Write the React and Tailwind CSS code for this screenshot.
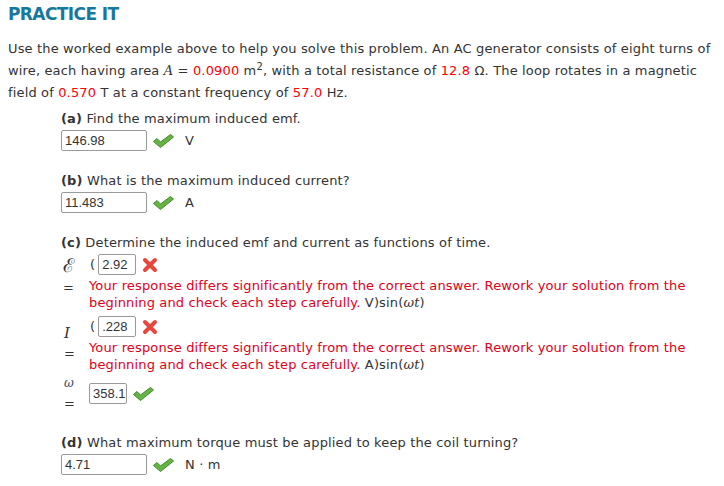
import React from 'react'

const Check = () => (
  <svg width="23" height="16" viewBox="0 0 23 16" className="shrink-0">
    <path d="M1.5 8.5 L5 5.5 L8.5 9 L18.5 1.5 L21.5 4 L8.5 14.5 Z" fill="#66b544" stroke="#3f8a2a" strokeWidth="1" strokeLinejoin="round" />
  </svg>
)

const Cross = () => (
  <svg width="16" height="16" viewBox="0 0 16 16" className="shrink-0">
    <path d="M3 3 L13 13 M13 3 L3 13" stroke="#e8473d" strokeWidth="4" strokeLinecap="round" />
  </svg>
)

const Box = ({ value, w }) => (
  <div className={`${w} h-[21px] border border-[#9a9a9a] rounded-[2px] bg-white px-[3px] flex items-center font-['Liberation_Sans'] text-[13px] text-[#333] leading-none tracking-normal`}>
    {value}
  </div>
)

const Red = ({ children }) => <span className="text-[#ff0000]">{children}</span>

const ErrorText = ({ unit }) => (
  <div className="leading-[17px] pt-[2px]">
    <span className="text-[#e0001a]">
      Your response differs significantly from the correct answer. Rework your solution from the beginning and check each step carefully.
    </span>{' '}
    {unit})sin(<i className="font-['DejaVu_Serif']">ωt</i>)
  </div>
)

function App() {
  return (
    <div className="w-[724px] h-[486px] bg-white text-[#333] text-[13px] tracking-[0.15px] font-['DejaVu_Sans',sans-serif] px-[8px] pt-[3px] overflow-hidden">

      {/* HEADING */}
      <h2 className="text-[17px] font-bold text-[#17789e] tracking-[-0.6px] leading-[22px]">PRACTICE IT</h2>

      {/* PROBLEM */}
      <p className="mt-[13px] leading-[22px]">
        Use the worked example above to help you solve this problem. An AC generator consists of eight turns of wire, each having area <i className="font-['DejaVu_Serif']">A</i> = <Red>0.0900</Red> m<sup className="text-[10px]">2</sup>, with a total resistance of <Red>12.8</Red> Ω. The loop rotates in a magnetic field of <Red>0.570</Red> T at a constant frequency of <Red>57.0</Red> Hz.
      </p>

      <div className="pl-[53px] pr-[20px]">

        {/* PART A */}
        <div className="mt-[6px]">
          <div className="leading-[17px]"><b>(a)</b> Find the maximum induced emf.</div>
          <div className="flex items-center mt-[3px]">
            <Box value="146.98" w="w-[86px]" />
            <div className="ml-[5px]"><Check /></div>
            <span className="ml-[10px]">V</span>
          </div>
        </div>

        {/* PART B */}
        <div className="mt-[21px]">
          <div className="leading-[17px]"><b>(b)</b> What is the maximum induced current?</div>
          <div className="flex items-center mt-[3px]">
            <Box value="11.483" w="w-[86px]" />
            <div className="ml-[5px]"><Check /></div>
            <span className="ml-[10px]">A</span>
          </div>
        </div>

        {/* PART C */}
        <div className="mt-[21px]">
          <div className="leading-[17px]"><b>(c)</b> Determine the induced emf and current as functions of time.</div>

          <div className="flex mt-[3px]">
            <div className="w-[28px] shrink-0 flex flex-col items-start pl-[2px] pt-[2px] leading-[18px]">
              <span className="font-['DejaVu_Serif'] text-[19px]">ℰ</span>
              <span className="mt-[5px]">=</span>
            </div>
            <div className="flex-1">
              <div className="flex items-center">
                <span className="ml-[1px] mr-[3px]">(</span>
                <Box value="2.92" w="w-[38px]" />
                <div className="ml-[6px]"><Cross /></div>
              </div>
              <ErrorText unit="V" />
            </div>
          </div>

          <div className="flex mt-[5px]">
            <div className="w-[28px] shrink-0 flex flex-col items-start pl-[3px] pt-[9px] leading-[16px]">
              <i className="font-['DejaVu_Serif'] text-[15px]">I</i>
              <span className="mt-[5px]">=</span>
            </div>
            <div className="flex-1">
              <div className="flex items-center">
                <span className="ml-[1px] mr-[3px]">(</span>
                <Box value=".228" w="w-[38px]" />
                <div className="ml-[6px]"><Cross /></div>
              </div>
              <ErrorText unit="A" />
            </div>
          </div>

          <div className="flex mt-[3px]">
            <div className="w-[28px] shrink-0 flex flex-col items-start pl-[3px] leading-[15px]">
              <i className="font-['DejaVu_Serif'] text-[12px] text-[#3a4a6a]">ω</i>
              <span className="mt-[5px]">=</span>
            </div>
            <div className="flex items-center self-start mt-[7px]">
              <Box value="358.1" w="w-[38px]" />
              <div className="ml-[5px]"><Check /></div>
            </div>
          </div>
        </div>

        {/* PART D */}
        <div className="mt-[23px]">
          <div className="leading-[17px]"><b>(d)</b> What maximum torque must be applied to keep the coil turning?</div>
          <div className="flex items-center mt-[3px]">
            <Box value="4.71" w="w-[86px]" />
            <div className="ml-[5px]"><Check /></div>
            <span className="ml-[10px]">N · m</span>
          </div>
        </div>

      </div>
    </div>
  )
}

export default App
